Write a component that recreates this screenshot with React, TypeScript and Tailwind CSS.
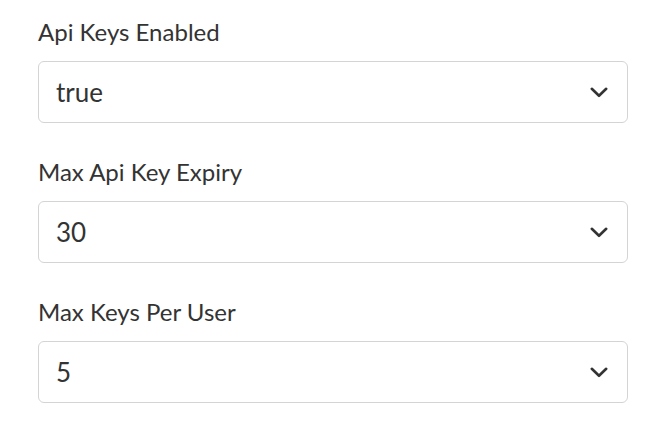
const fields = [
  { label: 'Api Keys Enabled', value: 'true' },
  { label: 'Max Api Key Expiry', value: '30' },
  { label: 'Max Keys Per User', value: '5' },
]

function Chevron() {
  return (
    <svg width="18" height="11" viewBox="0 0 18 11" fill="none" stroke="#333333" strokeWidth="2.6" strokeLinecap="round" strokeLinejoin="round">
      <path d="M1.8 1.8L9 8.8l7.2-7" />
    </svg>
  )
}

export default function App() {
  return (
    <div className="min-h-[434px] bg-white px-[38px] pt-[16px] font-['Lato',sans-serif] text-[#333333]">
      <div className="flex w-[590px] flex-col gap-[33px]">
        {fields.map((f) => (
          <div key={f.label} className="flex flex-col">
            <label className="text-[24px] leading-[32px] mb-[13px]">{f.label}</label>
            <div className="flex h-[62px] items-center justify-between rounded-[6px] border border-[#d4d4d4] pl-[17px] pr-[19px]">
              <span className="text-[26px] leading-none">{f.value}</span>
              <Chevron />
            </div>
          </div>
        ))}
      </div>
    </div>
  )
}
